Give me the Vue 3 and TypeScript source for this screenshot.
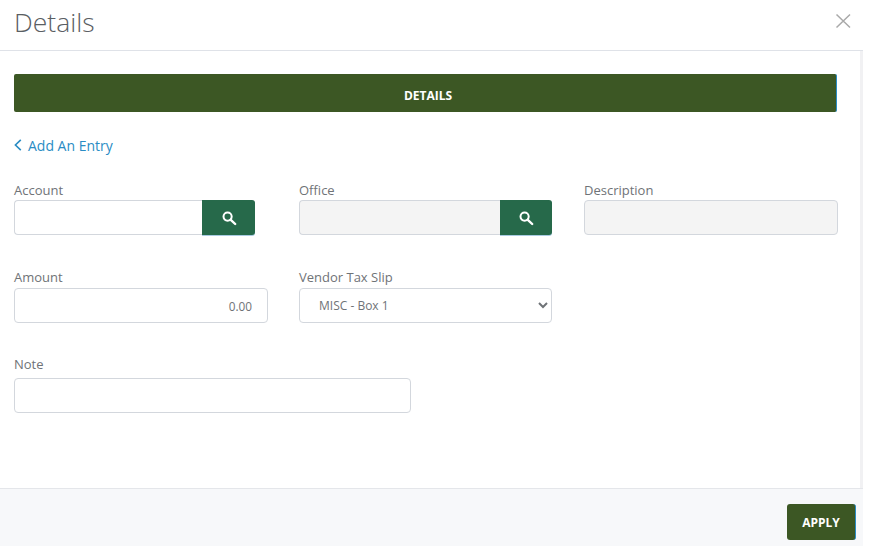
<script setup lang="ts">
import { ref } from 'vue'

const taxSlip = ref('MISC - Box 1')
const taxSlips: string[] = ['MISC - Box 1', 'MISC - Box 2', 'MISC - Box 3']
</script>

<template>
  <div class="modal">
    <header class="head">
      <h1 class="title">Details</h1>
      <button class="close" type="button" aria-label="Close">
        <svg width="16" height="16" viewBox="0 0 16 16" fill="none" stroke="#a9a9a9" stroke-width="1.5">
          <path d="M1.5 1.5l13.5 13M15 1.5L1.5 14.5" />
        </svg>
      </button>
    </header>

    <main class="body">
      <div class="bar">DETAILS</div>

      <a class="back" href="#" @click.prevent>
        <svg width="8" height="12" viewBox="0 0 8 12" fill="none" stroke="#2a8cc4" stroke-width="1.6">
          <path d="M6.8 0.8L1.4 6l5.4 5.2" />
        </svg>
        <span>Add An Entry</span>
      </a>

      <div class="grid row-one">
        <div class="field">
          <label>Account</label>
          <div class="group account-group">
            <input class="input" type="text" />
            <button class="search" type="button" aria-label="Search account">
              <svg width="16" height="16" viewBox="0 0 16 16" fill="none" stroke="#fff">
                <circle cx="6.6" cy="6.6" r="4.1" stroke-width="2" />
                <path d="M9.8 9.8l4.4 4.2" stroke-width="2.4" stroke-linecap="round" />
              </svg>
            </button>
          </div>
        </div>
        <div class="field">
          <label>Office</label>
          <div class="group narrow">
            <input class="input disabled" type="text" disabled />
            <button class="search" type="button" aria-label="Search office">
              <svg width="16" height="16" viewBox="0 0 16 16" fill="none" stroke="#fff">
                <circle cx="6.6" cy="6.6" r="4.1" stroke-width="2" />
                <path d="M9.8 9.8l4.4 4.2" stroke-width="2.4" stroke-linecap="round" />
              </svg>
            </button>
          </div>
        </div>
        <div class="field">
          <label>Description</label>
          <input class="input disabled" type="text" disabled />
        </div>
      </div>

      <div class="grid row-two">
        <div class="field">
          <label class="roomy">Amount</label>
          <input class="input amount" type="text" value="0.00" />
        </div>
        <div class="field">
          <label class="roomy">Vendor Tax Slip</label>
          <select v-model="taxSlip" class="input select narrow">
            <option v-for="slip in taxSlips" :key="slip" :value="slip">{{ slip }}</option>
          </select>
        </div>
      </div>

      <div class="field note">
        <label class="note-label">Note</label>
        <input class="input" type="text" />
      </div>
    </main>

    <footer class="foot">
      <button class="apply" type="button">APPLY</button>
    </footer>
  </div>
</template>

<style>
html,
body {
  margin: 0;
  background: #fff;
}
</style>

<style scoped>
.modal {
  width: 863px;
  height: 546px;
  display: flex;
  flex-direction: column;
  font-family: "Open Sans", sans-serif;
  color: #6b7280;
  overflow: hidden;
}

.head {
  height: 50px;
  box-sizing: content-box;
  flex: none;
  display: flex;
  align-items: flex-start;
  justify-content: space-between;
  border-bottom: 1px solid #dfe2e8;
  padding: 0 12px 0 14px;
}

.title {
  margin: 4px 0 0;
  font-size: 26.5px;
  line-height: 37px;
  font-weight: 300;
  color: #5a5e63;
}

.close {
  margin-top: 13px;
  padding: 0;
  width: 16px;
  height: 16px;
  border: 0;
  background: none;
  display: flex;
}

.body {
  flex: 1;
  min-height: 0;
  box-sizing: border-box;
  padding: 23px 22px 0 14px;
  border-right: 3px solid #f1f1f3;
}

.bar {
  height: 38px;
  width: 823px;
  box-sizing: border-box;
  border-radius: 2px;
  border-right: 1px solid #2a8cc4;
  background: #3c5724;
  color: #fff;
  font-size: 12px;
  font-weight: 700;
  padding: 5px 0 0 6px;
  display: flex;
  align-items: center;
  justify-content: center;
}

.back {
  margin-top: 23px;
  height: 20px;
  display: flex;
  align-items: center;
  gap: 6px;
  color: #2a8cc4;
  font-size: 14px;
  text-decoration: none;
}

.grid {
  display: grid;
  grid-template-columns: repeat(3, 254px);
  column-gap: 31px;
}

.row-one {
  margin-top: 27px;
}

.row-two {
  margin-top: 34px;
}

.field {
  display: flex;
  flex-direction: column;
}

label {
  font-size: 13px;
  line-height: 17px;
  height: 17px;
  margin-bottom: 1px;
  color: #6f7377;
}

label.roomy {
  margin-bottom: 2px;
}

.input {
  box-sizing: border-box;
  width: 100%;
  height: 35px;
  border: 1px solid #d3d7dd;
  border-radius: 4px;
  background: #fff;
  padding: 0 10px;
  font-family: inherit;
  font-size: 12px;
  color: #6f7377;
  outline: none;
}

.disabled {
  background: #f4f4f4;
}

.amount {
  text-align: right;
  padding-right: 15px;
  font-size: 11.8px;
}

.select {
  padding-left: 15px;
}

.select.narrow {
  width: 253px;
}

.group {
  display: flex;
  height: 35px;
}

.narrow {
  width: 253px;
}

.account-group {
  width: 241px;
}

.group .input {
  flex: 1;
  min-width: 0;
  border-radius: 4px 0 0 4px;
  border-right: 0;
}

.search {
  flex: none;
  width: 52px;
  height: 35px;
  border: 0;
  padding: 0;
  border-radius: 0 3px 3px 0;
  background: #26694a;
  display: flex;
  align-items: center;
  justify-content: center;
  box-shadow: 0 1px 0 #a9cbe2;
}

.account-group .search {
  width: 53px;
}

.note {
  margin-top: 33px;
  width: 397px;
}

.note-label {
  margin-bottom: 5px;
}

.foot {
  flex: none;
  height: 58px;
  box-sizing: border-box;
  border-top: 1px solid #e4e6ea;
  background: #f7f8fa;
  display: flex;
  justify-content: flex-end;
  padding: 15px 7px 0 0;
}

.apply {
  width: 69px;
  height: 36px;
  border: 0;
  border-right: 1px solid #2a8cc4;
  border-radius: 3px;
  background: #3c5724;
  color: #fff;
  font-family: inherit;
  font-size: 12px;
  font-weight: 700;
}
</style>
